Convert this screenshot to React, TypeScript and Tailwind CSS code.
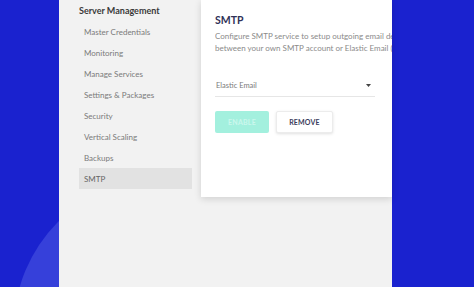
import React from 'react';

const menuItems = [
  'Master Credentials',
  'Monitoring',
  'Manage Services',
  'Settings & Packages',
  'Security',
  'Vertical Scaling',
  'Backups',
  'SMTP',
];

const App: React.FC = () => {
  const active = 'SMTP';

  return (
    <div className="relative w-[474px] h-[287px] overflow-hidden bg-[#1a22cf] font-['Lato',sans-serif]">
      {/* decorative circle */}
      <div className="absolute left-[14px] top-[178px] w-[300px] h-[300px] rounded-full bg-[#3640da]" />

      <div className="relative ml-[59px] w-[333px] h-full bg-[#f2f2f2] flex">
        {/* Sidebar */}
        <div className="w-[142px] shrink-0 pl-[20px] pt-[3px]">
          <div className="h-[15px] flex items-center text-[9px] font-bold text-[#3a3a3a]">Server Management</div>
          <div className="mt-[3px] flex flex-col">
            {menuItems.map(item => (
              <div
                key={item}
                className={`w-[113px] h-[21px] flex items-center pl-[5px] text-[8px] ${
                  item === active ? 'bg-[#e2e2e2] text-[#666]' : 'text-[#7a7a7a]'
                }`}
              >
                {item}
              </div>
            ))}
          </div>
        </div>

        {/* Card */}
        <div className="w-[191px] h-[197px] bg-white shadow-[0_2px_7px_rgba(0,0,0,0.14)] overflow-hidden pl-[14px] pt-[13px]">
          <h2 className="text-[10.5px] font-bold text-[#2f3157] leading-[14px]">SMTP</h2>
          <div className="mt-[3px] w-[177px] overflow-hidden text-[8px] leading-[12px] text-[#8a8a8a] whitespace-nowrap">
            <p>Configure SMTP service to setup outgoing email del</p>
            <p>between your own SMTP account or Elastic Email (Pa</p>
          </div>

          <div className="mt-[21px] w-[160px] h-[22px] flex items-center justify-between border-b border-[#e6e6e6] pl-[1px] pr-[4px]">
            <span className="text-[7.5px] text-[#7a7a7a]">Elastic Email</span>
            <svg width="5" height="3" viewBox="0 0 5 3">
              <path d="M0 0 L5 0 L2.5 3 Z" fill="#444" />
            </svg>
          </div>

          <div className="mt-[14px] flex gap-[7px]">
            <button className="w-[54px] h-[22px] rounded-[2px] bg-[#a3f0de] text-[7px] font-bold text-[#cbf7ed] tracking-[0.2px]">
              ENABLE
            </button>
            <button className="w-[57px] h-[22px] rounded-[2px] bg-white border border-[#ececec] shadow-[0_1px_3px_rgba(0,0,0,0.12)] text-[7px] font-bold text-[#3b3d5c] tracking-[0.2px]">
              REMOVE
            </button>
          </div>
        </div>
      </div>
    </div>
  );
};

export default App;
